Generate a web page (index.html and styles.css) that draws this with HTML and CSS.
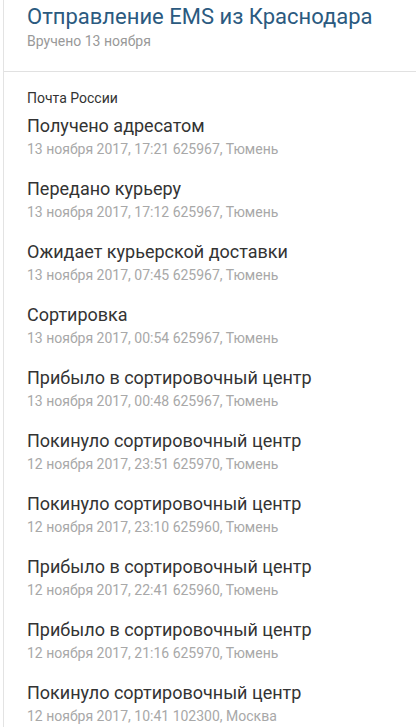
FILE: index.html
```html
<!DOCTYPE html>
<html lang="ru">
<head>
<meta charset="utf-8">
<link rel="stylesheet" href="styles.css">
</head>
<body>
<div class="page">
  <div class="header">
    <div class="title">Отправление EMS из Краснодара</div>
    <div class="subtitle">Вручено 13 ноября</div>
  </div>
  <div class="section">
    <div class="carrier">Почта России</div>
    <div class="events">
      <div class="event"><div class="ev-title">Получено адресатом</div><div class="ev-date">13 ноября 2017, 17:21 625967, Тюмень</div></div>
      <div class="event"><div class="ev-title">Передано курьеру</div><div class="ev-date">13 ноября 2017, 17:12 625967, Тюмень</div></div>
      <div class="event"><div class="ev-title">Ожидает курьерской доставки</div><div class="ev-date">13 ноября 2017, 07:45 625967, Тюмень</div></div>
      <div class="event"><div class="ev-title">Сортировка</div><div class="ev-date">13 ноября 2017, 00:54 625967, Тюмень</div></div>
      <div class="event"><div class="ev-title">Прибыло в сортировочный центр</div><div class="ev-date">13 ноября 2017, 00:48 625967, Тюмень</div></div>
      <div class="event"><div class="ev-title">Покинуло сортировочный центр</div><div class="ev-date">12 ноября 2017, 23:51 625970, Тюмень</div></div>
      <div class="event"><div class="ev-title">Покинуло сортировочный центр</div><div class="ev-date">12 ноября 2017, 23:10 625960, Тюмень</div></div>
      <div class="event"><div class="ev-title">Прибыло в сортировочный центр</div><div class="ev-date">12 ноября 2017, 22:41 625960, Тюмень</div></div>
      <div class="event"><div class="ev-title">Прибыло в сортировочный центр</div><div class="ev-date">12 ноября 2017, 21:16 625970, Тюмень</div></div>
      <div class="event"><div class="ev-title">Покинуло сортировочный центр</div><div class="ev-date">12 ноября 2017, 10:41 102300, Москва</div></div>
    </div>
  </div>
</div>
</body>
</html>
```
FILE: styles.css
```css
html, body {
  margin: 0;
  padding: 0;
  background: #ffffff;
}
body {
  font-family: Roboto, "Liberation Sans", sans-serif;
  overflow: hidden;
}
.page {
  margin-left: 3px;
  border-left: 1px solid #e3e3e3;
  min-height: 727px;
}
.header {
  padding: 4px 0 20px 23px;
  border-bottom: 1px solid #e1e1e1;
}
.title {
  font-size: 22px;
  line-height: 26px;
  color: #2b5a80;
  white-space: nowrap;
}
.subtitle {
  margin-top: 1px;
  font-size: 14px;
  line-height: 20px;
  color: #999999;
}
.section {
  padding: 17px 0 0 23px;
}
.carrier {
  font-size: 14px;
  line-height: 18px;
  color: #333333;
}
.events {
  display: flex;
  flex-direction: column;
  gap: 19px;
  margin-top: 7px;
}
.ev-title {
  font-size: 18px;
  line-height: 24px;
  color: #333333;
  white-space: nowrap;
}
.ev-date {
  margin-top: 2px;
  font-size: 14px;
  line-height: 18px;
  color: #a8a8a8;
  white-space: nowrap;
}
```
